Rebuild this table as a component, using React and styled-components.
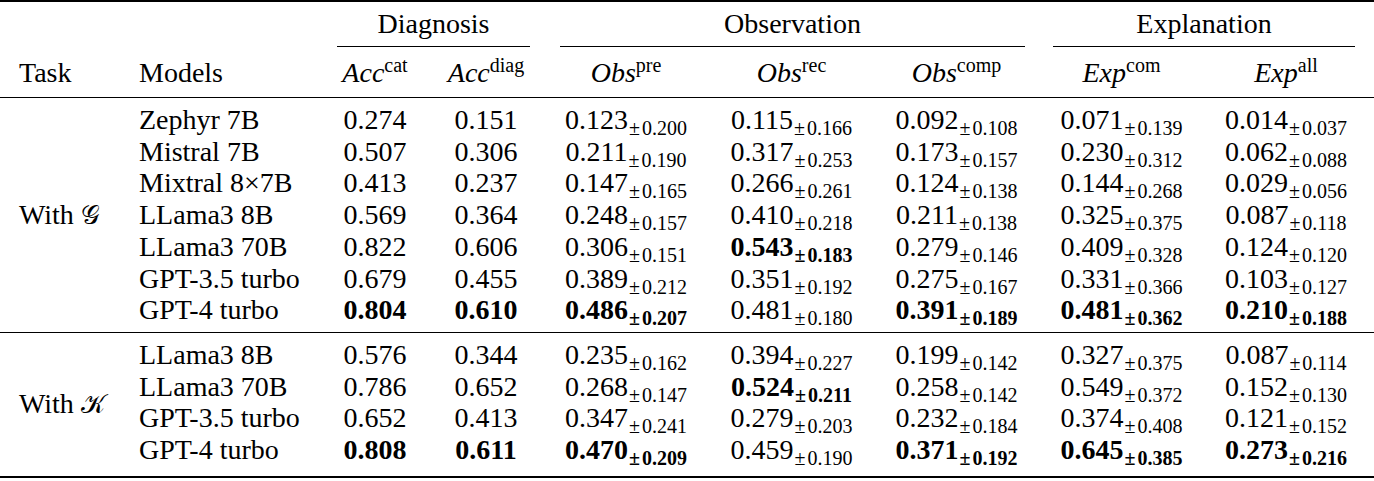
import React from "react";
import styled, { createGlobalStyle } from "styled-components";

const GlobalStyle = createGlobalStyle`
  html, body {
    margin: 0;
    padding: 0;
    background: #fff;
  }
  body {
    font-family: "Liberation Serif", "Times New Roman", serif;
    color: #000;
  }
`;

// helpers for the data below
const v = (mean, sd, bold = false) => ({ mean, sd, bold });
const b = (mean, sd) => v(mean, sd, true);

const groups = [
  {
    task: "G",
    padBottom: 6,
    rows: [
      ["Zephyr 7B", v("0.274"), v("0.151"), v("0.123", "0.200"), v("0.115", "0.166"), v("0.092", "0.108"), v("0.071", "0.139"), v("0.014", "0.037")],
      ["Mistral 7B", v("0.507"), v("0.306"), v("0.211", "0.190"), v("0.317", "0.253"), v("0.173", "0.157"), v("0.230", "0.312"), v("0.062", "0.088")],
      ["Mixtral 8×7B", v("0.413"), v("0.237"), v("0.147", "0.165"), v("0.266", "0.261"), v("0.124", "0.138"), v("0.144", "0.268"), v("0.029", "0.056")],
      ["LLama3 8B", v("0.569"), v("0.364"), v("0.248", "0.157"), v("0.410", "0.218"), v("0.211", "0.138"), v("0.325", "0.375"), v("0.087", "0.118")],
      ["LLama3 70B", v("0.822"), v("0.606"), v("0.306", "0.151"), b("0.543", "0.183"), v("0.279", "0.146"), v("0.409", "0.328"), v("0.124", "0.120")],
      ["GPT-3.5 turbo", v("0.679"), v("0.455"), v("0.389", "0.212"), v("0.351", "0.192"), v("0.275", "0.167"), v("0.331", "0.366"), v("0.103", "0.127")],
      ["GPT-4 turbo", b("0.804"), b("0.610"), b("0.486", "0.207"), v("0.481", "0.180"), b("0.391", "0.189"), b("0.481", "0.362"), b("0.210", "0.188")],
    ],
  },
  {
    task: "K",
    padBottom: 10,
    rows: [
      ["LLama3 8B", v("0.576"), v("0.344"), v("0.235", "0.162"), v("0.394", "0.227"), v("0.199", "0.142"), v("0.327", "0.375"), v("0.087", "0.114")],
      ["LLama3 70B", v("0.786"), v("0.652"), v("0.268", "0.147"), b("0.524", "0.211"), v("0.258", "0.142"), v("0.549", "0.372"), v("0.152", "0.130")],
      ["GPT-3.5 turbo", v("0.652"), v("0.413"), v("0.347", "0.241"), v("0.279", "0.203"), v("0.232", "0.184"), v("0.374", "0.408"), v("0.121", "0.152")],
      ["GPT-4 turbo", b("0.808"), b("0.611"), b("0.470", "0.209"), v("0.459", "0.190"), b("0.371", "0.192"), b("0.645", "0.385"), b("0.273", "0.216")],
    ],
  },
];

const colWidths = [120, 201, 108, 114, 166, 165, 165, 165, 170];

const headerGroups = [
  { label: "Diagnosis", span: 2, l: 16, r: 13 },
  { label: "Observation", span: 3, l: 17, r: 14 },
  { label: "Explanation", span: 2, l: 14, r: 19 },
];

const metrics = [
  ["Acc", "cat"],
  ["Acc", "diag"],
  ["Obs", "pre"],
  ["Obs", "rec"],
  ["Obs", "comp"],
  ["Exp", "com"],
  ["Exp", "all"],
];

const Table = styled.table`
  width: 1374px;
  table-layout: fixed;
  border-collapse: collapse;
  font-size: 28px;
  border-top: 2px solid #000;
  border-bottom: 2px solid #000;
`;

const Head = styled.thead`
  border-bottom: 1px solid #000;
`;

const Group = styled.tbody`
  border-bottom: ${(p) => (p.$ruled ? "1px solid #000" : "none")};
`;

const GroupTh = styled.th`
  padding: 0;
  height: 46px;
  vertical-align: top;
  font-weight: normal;
`;

const GroupLabel = styled.div`
  margin: 0 ${(p) => p.$r}px 0 ${(p) => p.$l}px;
  border-bottom: 1px solid #000;
  line-height: 44px;
  text-align: center;
`;

const HeadTh = styled.th`
  padding: 0 ${(p) => (p.$last ? 6 : 0)}px 0 ${(p) => (p.$left ? 19 : 0)}px;
  height: 49px;
  font-weight: normal;
  text-align: ${(p) => (p.$left ? "left" : "center")};
  vertical-align: middle;
  white-space: nowrap;
`;

const TaskCell = styled.td`
  padding: 0 0 0 19px;
  text-align: left;
  vertical-align: middle;
  white-space: nowrap;
`;

const Cell = styled.td`
  padding: ${(p) => p.$top}px ${(p) => (p.$last ? 6 : 0)}px ${(p) => p.$bottom}px
    ${(p) => (p.$left ? 19 : 0)}px;
  line-height: 31.7px;
  text-align: ${(p) => (p.$left ? "left" : "center")};
  white-space: nowrap;
  font-weight: ${(p) => (p.$bold ? "bold" : "normal")};
`;

const MathVar = styled.span`
  font-style: italic;
`;

const Sup = styled.span`
  font-size: 20px;
  line-height: 0;
  vertical-align: 10px;
  font-style: normal;
`;

const Sd = styled.span`
  font-size: 20px;
  line-height: 0;
  vertical-align: -6px;
`;

const Pm = styled.span`
  margin: 0 2px 0 1px;
`;

const Script = styled.span`
  font-family: "DejaVu Serif", "DejaVu Sans", serif;
  font-size: 26px;
`;

const scriptGlyph = { G: "𝒢", K: "𝒦" };

function Value({ data }) {
  return (
    <>
      {data.mean}
      {data.sd && (
        <Sd>
          <Pm>±</Pm>
          {data.sd}
        </Sd>
      )}
    </>
  );
}

export default function App() {
  return (
    <>
      <GlobalStyle />
      <Table>
        <colgroup>
          {colWidths.map((w, i) => (
            <col key={i} style={{ width: w }} />
          ))}
        </colgroup>
        <Head>
          <tr>
            <GroupTh colSpan={2} />
            {headerGroups.map((g) => (
              <GroupTh key={g.label} colSpan={g.span}>
                <GroupLabel $l={g.l} $r={g.r}>
                  {g.label}
                </GroupLabel>
              </GroupTh>
            ))}
          </tr>
          <tr>
            <HeadTh $left>Task</HeadTh>
            <HeadTh $left>Models</HeadTh>
            {metrics.map(([name, sup], i) => (
              <HeadTh key={sup} $last={i === metrics.length - 1}>
                <MathVar>{name}</MathVar>
                <Sup>{sup}</Sup>
              </HeadTh>
            ))}
          </tr>
        </Head>
        {groups.map((group, gi) => (
          <Group key={group.task} $ruled={gi === 0}>
            {group.rows.map((row, ri) => {
              const top = ri === 0 ? 6 : 0;
              const bottom = ri === group.rows.length - 1 ? group.padBottom : 0;
              const [model, ...vals] = row;
              return (
                <tr key={model}>
                  {ri === 0 && (
                    <TaskCell rowSpan={group.rows.length}>
                      With <Script>{scriptGlyph[group.task]}</Script>
                    </TaskCell>
                  )}
                  <Cell $left $top={top} $bottom={bottom}>
                    {model}
                  </Cell>
                  {vals.map((val, vi) => (
                    <Cell
                      key={vi}
                      $top={top}
                      $bottom={bottom}
                      $bold={val.bold}
                      $last={vi === vals.length - 1}
                    >
                      <Value data={val} />
                    </Cell>
                  ))}
                </tr>
              );
            })}
          </Group>
        ))}
      </Table>
    </>
  );
}
